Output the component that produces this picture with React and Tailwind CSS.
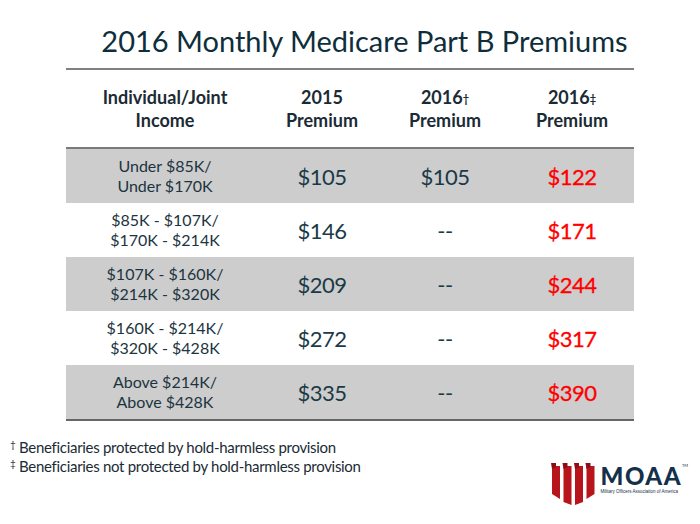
import React from "react";

const ROWS = [
  { income: ["Under $85K/", "Under $170K"], p2015: "$105", p2016a: "$105", p2016b: "$122", shade: true },
  { income: ["$85K - $107K/", "$170K - $214K"], p2015: "$146", p2016a: "--", p2016b: "$171", shade: false },
  { income: ["$107K - $160K/", "$214K - $320K"], p2015: "$209", p2016a: "--", p2016b: "$244", shade: true },
  { income: ["$160K - $214K/", "$320K - $428K"], p2015: "$272", p2016a: "--", p2016b: "$317", shade: false },
  { income: ["Above $214K/", "Above $428K"], p2015: "$335", p2016a: "--", p2016b: "$390", shade: true },
];

const COLS = "grid grid-cols-[198px_116px_130px_124px]";

function MoaaLogo() {
  // four red bars shaped like a shield
  const bars = [
    { x: 1, l: 31, r: 36 },
    { x: 12.5, l: 39, r: 42 },
    { x: 24, l: 42, r: 39 },
    { x: 35.5, l: 36, r: 31 },
  ];
  return (
    <div className="flex items-start">
      <svg width="44" height="44" viewBox="0 0 44 44">
        {bars.map((b, i) => (
          <g key={i}>
            <path
              d={`M${b.x} 3 L${b.x + 8} 3 L${b.x + 8} ${b.r} L${b.x} ${b.l} Z`}
              fill="#b8141c"
            />
            <path
              d={`M${b.x - 1} 0 L${b.x + 4} 0 L${b.x + 4} 4 L${b.x} 6 Z`}
              fill="#8c0e14"
            />
          </g>
        ))}
      </svg>
      <div className="ml-[6px] mt-[1px] flex flex-col relative">
        <span className="font-['Lato',sans-serif] font-black text-[24px] leading-[24px] text-[#14304a] tracking-[1.5px]">
          MOAA
        </span>
        <span className="absolute right-[-6px] top-[0px] text-[4px] leading-none text-[#14304a]">TM</span>
        <span className="font-['Liberation_Sans',sans-serif] text-[4.5px] leading-[6px] text-[#14304a] mt-[1px]">
          Military Officers Association of America
        </span>
      </div>
    </div>
  );
}

export default function App() {
  return (
    <div className="w-[700px] h-[524px] bg-white font-['Lato',sans-serif] overflow-hidden">
      <h1 className="pt-[24px] text-center text-[29px] leading-[34px] text-[#0e2e3b] pl-[29px]">
        2016 Monthly Medicare Part B Premiums
      </h1>

      <div className="ml-[66px] w-[568px] mt-[10px]">
        <div className="border-t-2 border-[#808080]" />

        {/* HEADER */}
        <div className={`${COLS} h-[77px] items-center text-center font-bold text-[18px] leading-[23px] text-[#1b2b35]`}>
          <div>Individual/Joint<br />Income</div>
          <div>2015<br />Premium</div>
          <div>2016<sup className="text-[11px] relative top-[-1px]">†</sup><br />Premium</div>
          <div>2016<sup className="text-[11px] relative top-[-1px]">‡</sup><br />Premium</div>
        </div>

        {/* ROWS */}
        <div className="border-t-2 border-[#7a7a7a] border-b-2 border-b-[#666666]">
          {ROWS.map((row, i) => (
            <div
              key={i}
              className={`${COLS} h-[54px] items-center text-center ${row.shade ? "bg-[#cdcdcd]" : "bg-white"}`}
            >
              <div className="text-[16px] leading-[20px] text-[#1c3440]">
                {row.income[0]}<br />{row.income[1]}
              </div>
              <div className="text-[22px] text-[#1a3a47] tracking-[-0.5px]">{row.p2015}</div>
              <div className="text-[22px] text-[#1a3a47] tracking-[-0.5px]">{row.p2016a}</div>
              <div className="text-[22px] text-[#ff0000] tracking-[-0.5px] [-webkit-text-stroke:0.3px_#ff0000]">{row.p2016b}</div>
            </div>
          ))}
        </div>
      </div>

      {/* FOOTNOTES */}
      <div className="flex justify-between items-start mt-[17px] pl-[10px] pr-[18px]">
        <div className="text-[15px] leading-[19px] text-[#1b2b35] tracking-[-0.3px]">
          <div><sup className="text-[10px]">†</sup> Beneficiaries protected by hold-harmless provision</div>
          <div><sup className="text-[10px]">‡</sup> Beneficiaries not protected by hold-harmless provision</div>
        </div>
        <div className="mt-[25px]">
          <MoaaLogo />
        </div>
      </div>
    </div>
  );
}
